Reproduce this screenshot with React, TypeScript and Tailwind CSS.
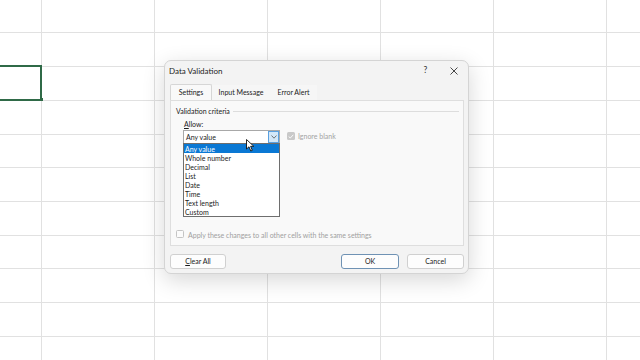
const rowHeights = [
  "h-[33px]",
  "h-[34px]",
  "h-[34px]",
  "h-[34px]",
  "h-[33px]",
  "h-[34px]",
  "h-[34px]",
  "h-[33px]",
  "h-[34px]",
  "h-[34px]",
  "h-[34px]",
]

const colWidths = ["w-[42px]", "w-[113px]", "w-[113px]", "w-[113px]", "w-[113px]", "w-[113px]", "w-[113px]"]

const allowOptions = ["Any value", "Whole number", "Decimal", "List", "Date", "Time", "Text length", "Custom"]

const SheetGrid = () => {
  return (
    <div className="flex flex-col">
      {rowHeights.map((h, r) => (
        <div key={r} className={`flex shrink-0 border-b border-[#e1e1e1] ${h}`}>
          {colWidths.map((w, c) => (
            <div key={c} className={`shrink-0 border-r border-[#e1e1e1] ${w}`} />
          ))}
        </div>
      ))}
    </div>
  )
}

const Cursor = () => (
  <svg width="9" height="13" viewBox="0 0 9 13" className="absolute left-[246px] top-[139px]">
    <path d="M0.5 0.5 L0.5 10 L3 7.8 L4.8 12 L6.3 11.3 L4.6 7.3 L7.8 7.3 Z" fill="#fff" stroke="#111" strokeWidth="0.9" strokeLinejoin="round" />
  </svg>
)

const Dialog = () => {
  return (
    <div className="absolute left-[164px] top-[60px] flex h-[214px] w-[305px] flex-col rounded-[7px] border border-[#d4d4d4] bg-[#f3f3f3] text-[#1b1b1b] shadow-[0_6px_22px_rgba(0,0,0,0.16)]">
      {/* title bar */}
      <div className="flex h-[19px] items-center pl-[4px]">
        <span className="flex-1 text-[8px]">Data Validation</span>
        <span className="mr-[20px] w-[9px] text-center text-[8.5px] text-[#333]">?</span>
        <svg width="8" height="8" viewBox="0 0 8 8" className="mr-[10px]">
          <path d="M0.5 0.5 L7.5 7.5 M7.5 0.5 L0.5 7.5" stroke="#333" strokeWidth="0.9" />
        </svg>
      </div>

      {/* tabs */}
      <div className="ml-[5px] mt-[4px] flex h-[16px] items-end text-[7px]">
        <div className="flex h-[16px] w-[42px] items-center justify-center rounded-t-[2px] border border-b-0 border-[#d6d6d6] bg-[#f9f9f9]">
          Settings
        </div>
        <div className="flex h-[15px] w-[58px] items-center justify-center bg-[#f6f6f6]">Input Message</div>
        <div className="flex h-[15px] w-[47px] items-center justify-center bg-[#f6f6f6]">Error Alert</div>
      </div>

      {/* settings panel */}
      <div className="relative ml-[5px] mr-[4px] flex h-[146px] flex-col border border-[#dedede] bg-[#f9f9f9]">
        <div className="mt-[5px] flex items-center pl-[5px] pr-[4px]">
          <span className="text-[7px] leading-[10px]">Validation criteria</span>
          <div className="ml-[3px] h-px flex-1 bg-[#dddddd]" />
        </div>

        <div className="ml-[13px] mt-[3px] text-[7px] leading-[10px]">
          <span className="underline underline-offset-[1px]">A</span>llow:
        </div>

        <div className="ml-[12px] mt-[1px] flex items-start">
          <div className="flex h-[14px] w-[97px] items-center border border-[#a8a8a8] bg-white">
            <span className="flex-1 pl-[2px] pt-[1px] text-[7px]">Any value</span>
            <div className="flex h-[12px] w-[11px] items-center justify-center border border-[#5aa0e0] bg-[#d3e7f8]">
              <svg width="6" height="4" viewBox="0 0 6 4">
                <path d="M0.5 0.5 L3 3.2 L5.5 0.5" fill="none" stroke="#555" strokeWidth="0.8" />
              </svg>
            </div>
          </div>
          <div className="ml-[7px] mt-[1px] flex items-center gap-[3px]">
            <div className="flex h-[8px] w-[8px] items-center justify-center rounded-[1.5px] bg-[#c9c9c9]">
              <svg width="6" height="5" viewBox="0 0 6 5">
                <path d="M0.7 2.6 L2.3 4 L5.3 0.8" fill="none" stroke="#fff" strokeWidth="0.9" />
              </svg>
            </div>
            <span className="text-[7px] text-[#a3a3a3]">Ignore blank</span>
          </div>
        </div>

        <div className="mb-[5px] ml-[5px] mt-auto flex items-center gap-[4px]">
          <div className="h-[8px] w-[8px] rounded-[1.5px] border border-[#c4c4c4] bg-[#fbfbfb]" />
          <span className="pt-[1px] text-[7px] text-[#a0a0a0]">Apply these changes to all other cells with the same settings</span>
        </div>

        {/* open dropdown list */}
        <div className="absolute left-[12px] top-[42px] w-[97px] border border-[#6e6e6e] bg-white">
          {allowOptions.map((opt, i) => (
            <div
              key={opt}
              className={`flex h-[9px] items-center pl-[1px] pt-[1px] text-[7px] ${i === 0 ? "bg-[#0a78d4] text-white" : "text-[#1b1b1b]"}`}
            >
              {opt}
            </div>
          ))}
        </div>
      </div>

      {/* buttons */}
      <div className="mt-[8px] flex h-[15px] text-[7px]">
        <button className="ml-[5px] w-[56px] rounded-[3px] border border-[#d0d0d0] bg-[#fdfdfd]">
          <span className="underline underline-offset-[1px]">C</span>lear All
        </button>
        <button className="ml-auto w-[58px] rounded-[3px] border border-[#6f92b4] bg-[#fdfdfd]">OK</button>
        <button className="ml-[8px] mr-[4px] w-[57px] rounded-[3px] border border-[#d0d0d0] bg-[#fdfdfd]">Cancel</button>
      </div>
    </div>
  )
}

export default function App() {
  return (
    <div className="relative h-[360px] w-[640px] overflow-hidden bg-white font-['Lato',sans-serif]">
      <SheetGrid />
      <div className="absolute left-[-2px] top-[65px] h-[36px] w-[44px] border-2 border-[#2f6a47]" />
      <div className="absolute left-[40px] top-[98px] h-[3px] w-[3px] bg-[#2f6a47]" />
      <Dialog />
      <Cursor />
    </div>
  )
}
